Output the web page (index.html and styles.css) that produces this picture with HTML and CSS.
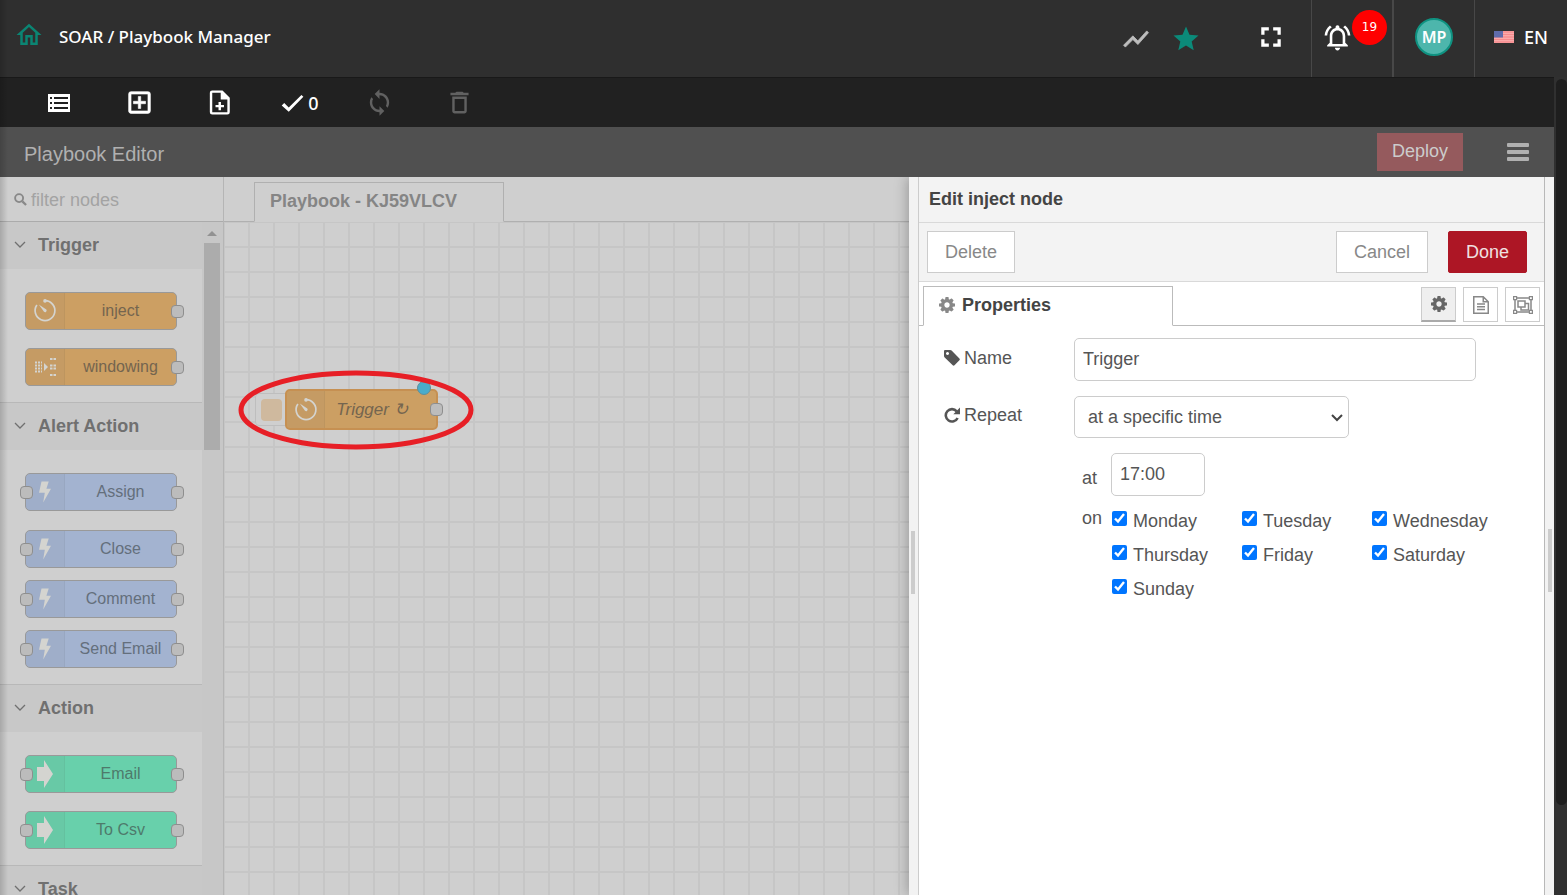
FILE: index.html
```html
<!DOCTYPE html>
<html lang="en">
<head>
<meta charset="utf-8">
<meta name="viewport" content="width=device-width, initial-scale=1">
<title>SOAR / Playbook Manager</title>
<link rel="stylesheet" href="styles.css">
</head>
<body>
<svg class="sprite" aria-hidden="true">
  <symbol id="cog" viewBox="0 -128 1536 1536"><path d="M1024 640q0-106-75-181t-181-75-181 75-75 181 75 181 181 75 181-75 75-181zm512-109v222q0 12-8 23t-20 13l-185 28q-19 54-39 91 35 50 107 138 10 12 10 25t-9 23q-27 37-99 108t-94 71q-12 0-26-9l-138-108q-44 23-91 38-16 136-29 186-7 28-36 28h-222q-14 0-24.5-8.5t-11.5-21.5l-28-184q-49-16-90-37l-141 107q-10 9-25 9-14 0-25-11-126-114-165-168-7-10-7-23 0-12 8-23 15-21 51-66.5t54-70.5q-27-50-41-99l-183-27q-13-2-21-12.5t-8-23.5v-222q0-12 8-23t19-13l186-28q14-46 39-92-40-57-107-138-10-12-10-24 0-10 9-23 26-36 98.500-107.500t94.500-71.500q13 0 26 10l138 107q44-23 91-38 16-136 29-186 7-28 36-28h222q14 0 24.500 8.500t11.500 21.500l28 184q49 16 90 37l142-107q9-9 24-9 13 0 25 10 129 119 165 170 7 8 7 22 0 12-8 23-15 21-51 66.500t-54 70.500q26 50 41 98l183 28q13 2 21 12.500t8 23.500z"/></symbol>
  <symbol id="timer" viewBox="0 0 24 24"><path d="M12 1.700A9.900 9.900 0 1 1 3.900 5.900" fill="none" stroke="currentColor" stroke-width="1.700"/><circle cx="12" cy="1.900" r="1.800"/><path d="M5.800 5.600l7.500 4.900a1.600 1.600 0 0 1-2.300 2.200z"/></symbol>
  <symbol id="window" viewBox="0 0 24 24"><path d="M2 6.500h2v2H2zM5 6.500h2v2H5zM2 9.500h2v2H2zM5 9.500h2v2H5zM2 12.500h2v2H2zM5 12.500h2v2H5zM2 15.500h2v2H2zM5 15.500h2v2H5zM11 8l4 4-4 4zM17 3h2.500v2H17zM20.500 3H23v2h-2.500zM17 9.500h2.500v2H17zM20.500 9.500H23v2h-2.500zM17 12.500h2.500v2H17zM20.500 12.500H23v2h-2.500zM17 19h2.500v2H17zM20.500 19H23v2h-2.500zM8 6.500h1v2H8zM8 9.500h1v2H8zM8 12.500h1v2H8zM8 15.500h1v2H8z"/></symbol>
  <symbol id="bolt" viewBox="0 0 24 24"><path d="M8.500 1.500h7.200l-2.300 7.300H18L10.200 22.500l1.600-9.700H6z"/></symbol>
  <symbol id="arrow" viewBox="0 0 16 28"><path d="M0 7h7V0l9 14-9 14v-7H0z"/></symbol>
  <symbol id="chevron" viewBox="0 0 12 12"><path d="M1 3l5 5 5-5" fill="none" stroke="currentColor" stroke-width="1.300"/></symbol>
</svg>

<header class="topbar">
  <a class="home" href="#" aria-label="Home"><svg viewBox="0 0 24 24"><path d="M12 5.690l5 4.500V18h-2v-6H9v6H7v-7.810l5-4.500M12 3L2 12h3v8h6v-6h2v6h6v-8h3L12 3z"/></svg></a>
  <h1 class="crumb">SOAR / Playbook Manager</h1>
  <button class="top-icon trend" type="button" aria-label="Statistics"><svg viewBox="0 0 24 24"><path d="M3.500 18.490l6-6.010 4 4L22 6.920l-1.410-1.410-7.090 7.970-4-4L2 16.990z" stroke="currentColor" stroke-width=".6"/></svg></button>
  <button class="top-icon star" type="button" aria-label="Favorite"><svg viewBox="0 0 24 24"><path d="M12 17.270L18.180 21l-1.640-7.030L22 9.240l-7.190-.610L12 2 9.190 8.630 2 9.240l5.460 4.730L5.820 21z"/></svg></button>
  <button class="top-icon full" type="button" aria-label="Full screen"><svg viewBox="0 0 24 24"><path d="M3 3h7v3H6v4H3zM14 3h7v7h-3V6h-4zM3 14h3v4h4v3H3zM18 14h3v7h-7v-3h4z"/></svg></button>
  <button class="cell alerts" type="button" aria-label="Notifications"><svg viewBox="0 0 24 24"><path d="M7.580 4.080L6.150 2.650C3.750 4.480 2.170 7.300 2.030 10.500h2c.150-2.650 1.510-4.970 3.550-6.420zm12.390 6.420h2c-.150-3.200-1.730-6.020-4.120-7.850l-1.420 1.430c2.020 1.450 3.390 3.770 3.540 6.420zM18 11c0-3.070-1.640-5.640-4.500-6.320V4c0-.830-.670-1.500-1.500-1.500s-1.500.670-1.500 1.500v.680C7.630 5.360 6 7.920 6 11v5l-2 2v1h16v-1l-2-2v-5zm-2 6H8v-6c0-2.480 1.510-4.500 4-4.500s4 2.020 4 4.500v6zm-4 5c1.100 0 2-.900 2-2h-4c0 1.100.890 2 2 2z"/></svg><span class="badge">19</span></button>
  <button class="cell user" type="button"><span class="avatar">MP</span></button>
  <button class="cell lang" type="button"><svg class="flag" viewBox="0 0 20 12"><rect width="20" height="12" fill="#fbb4b4"/><path d="M0 1h20M0 3.500h20M0 6h20M0 8.500h20M0 11h20" stroke="#f78a8d" stroke-width="1.300"/><rect width="9" height="6.500" fill="#5f6bab"/></svg>EN</button>
</header>

<div class="page">
  <div class="app">
    <nav class="actions" aria-label="Playbook actions">
      <button type="button" aria-label="List"><svg viewBox="0 0 24 20"><path d="M1 1h22v18H1zm2 3v2h2V4zm4 0v2h14V4zM3 9v2h2V9zm4 0v2h14V9zm-4 5v2h2v-2zm4 0v2h14v-2z" fill-rule="evenodd"/></svg></button>
      <button type="button" aria-label="Add"><svg class="large" viewBox="0 0 24 24"><path d="M19 3H5a2 2 0 0 0-2 2v14c0 1.100.900 2 2 2h14a2 2 0 0 0 2-2V5a2 2 0 0 0-2-2zm0 16H5V5h14zM11 17h2v-4h4v-2h-4V7h-2v4H7v2h4z" stroke="currentColor" stroke-width=".5"/></svg></button>
      <button type="button" aria-label="New file"><svg class="large" viewBox="0 0 24 24"><path d="M6 2h8.500L20.500 8v12a2 2 0 0 1-2 2H6a2 2 0 0 1-2-2V4a2 2 0 0 1 2-2zm0 2v16h12.500V9.500h-5.500V4z" fill-rule="evenodd"/><path d="M11.200 11.500h2V14h2.500v2h-2.500v2.500h-2V16H8.700v-2h2.500z"/></svg></button>
      <button type="button"><svg class="check" viewBox="0 0 24 24"><path d="M9 16.170L4.830 12l-2.330 2.300L9 20 22.500 6.300 20.700 4.500z"/></svg>0</button>
      <button class="off" type="button" aria-label="Refresh" disabled><svg class="large" viewBox="0 0 24 24"><path d="M12 4V1L8 5l4 4V6c3.310 0 6 2.690 6 6 0 1.010-.250 1.970-.700 2.800l1.460 1.460A7.930 7.930 0 0 0 20 12c0-4.420-3.580-8-8-8zm0 14c-3.310 0-6-2.690-6-6 0-1.010.250-1.970.700-2.800L5.240 7.740A7.930 7.930 0 0 0 4 12c0 4.420 3.580 8 8 8v3l4-4-4-4z"/></svg></button>
      <button class="off" type="button" aria-label="Remove" disabled><svg class="large" viewBox="0 0 24 24"><path d="M6 19c0 1.100.900 2 2 2h8c1.100 0 2-.900 2-2V7H6zM8 9h8v10H8zm7.500-5l-1-1h-5l-1 1H4.500v2h15V4z"/></svg></button>
    </nav>
    <div class="editor-head">
      <h2>Playbook Editor</h2>
      <button class="deploy" type="button">Deploy</button>
      <button class="menu" type="button" aria-label="Menu"><svg viewBox="0 0 22 18"><rect width="22" height="4" rx="1"/><rect y="7" width="22" height="4" rx="1"/><rect y="14" width="22" height="4" rx="1"/></svg></button>
    </div>
    <div class="editor">
      <aside class="palette">
        <label class="search"><svg viewBox="0 0 14 14"><circle cx="5.500" cy="5.500" r="4.300" fill="none" stroke="currentColor" stroke-width="2"/><path d="M9 9l4 4" stroke="currentColor" stroke-width="2.400"/></svg><input type="text" placeholder="filter nodes" aria-label="filter nodes"></label>
        <div class="palette-body">
          <div class="categories">
            <section>
              <h3><svg><use href="#chevron"/></svg>Trigger</h3>
              <div class="nodes">
                <div class="node orange"><span class="ico"><svg><use href="#timer"/></svg></span><span class="name">inject</span><i class="port out"></i></div>
                <div class="node orange"><span class="ico"><svg><use href="#window"/></svg></span><span class="name">windowing</span><i class="port out"></i></div>
              </div>
            </section>
            <section>
              <h3><svg><use href="#chevron"/></svg>Alert Action</h3>
              <div class="nodes tight">
                <div class="node blue"><i class="port in"></i><span class="ico"><svg><use href="#bolt"/></svg></span><span class="name">Assign</span><i class="port out"></i></div>
                <div class="node blue"><i class="port in"></i><span class="ico"><svg><use href="#bolt"/></svg></span><span class="name">Close</span><i class="port out"></i></div>
                <div class="node blue"><i class="port in"></i><span class="ico"><svg><use href="#bolt"/></svg></span><span class="name">Comment</span><i class="port out"></i></div>
                <div class="node blue"><i class="port in"></i><span class="ico"><svg><use href="#bolt"/></svg></span><span class="name">Send Email</span><i class="port out"></i></div>
              </div>
            </section>
            <section>
              <h3><svg><use href="#chevron"/></svg>Action</h3>
              <div class="nodes">
                <div class="node green"><i class="port in"></i><span class="ico"><svg class="arrow"><use href="#arrow"/></svg></span><span class="name">Email</span><i class="port out"></i></div>
                <div class="node green"><i class="port in"></i><span class="ico"><svg class="arrow"><use href="#arrow"/></svg></span><span class="name">To Csv</span><i class="port out"></i></div>
              </div>
            </section>
            <section>
              <h3><svg><use href="#chevron"/></svg>Task</h3>
            </section>
          </div>
          <div class="palette-scroll"><svg viewBox="0 0 10 5"><path d="M0 5l5-5 5 5z"/></svg><div class="palette-thumb"></div></div>
        </div>
      </aside>

      <main class="workspace">
        <div class="tabs"><div class="tab">Playbook - KJ59VLCV</div></div>
        <div class="canvas">
          <div class="inject-button"><i></i></div>
          <div class="node orange placed"><span class="ico"><svg><use href="#timer"/></svg></span><span class="name">Trigger ↻</span><i class="port out"></i><i class="changed"></i></div>
          <svg class="ring" viewBox="0 0 236 82"><ellipse cx="118" cy="41" rx="115" ry="37" fill="none" stroke="#e71f26" stroke-width="5"/></svg>
        </div>
      </main>

      <section class="tray">
        <div class="grip"><i></i></div>
        <form class="panel">
          <h3 class="tray-title">Edit inject node</h3>
          <div class="tray-buttons">
            <button class="btn" type="button">Delete</button>
            <button class="btn cancel" type="button">Cancel</button>
            <button class="btn done" type="button">Done</button>
          </div>
          <div class="tray-tabs">
            <div class="prop-tab"><svg><use href="#cog"/></svg>Properties</div>
            <div class="tab-icons">
              <button class="on" type="button" aria-label="Properties"><svg><use href="#cog"/></svg></button>
              <button type="button" aria-label="Description"><svg class="doc" viewBox="0 0 16 18"><path d="M.750.750h9.500l5 5v11.500H.750zM10.250.750v5h5M4 8h8M4 10.800h8M4 13.600h8" fill="none" stroke="currentColor" stroke-width="1.500"/></svg></button>
              <button type="button" aria-label="Appearance"><svg class="frame" viewBox="0 0 20 18"><path d="M2 2h16v14H2zM5 5h7v6H5zM12 7.500h3.500V14H8v-3" fill="none" stroke="currentColor" stroke-width="1.500"/><path d="M.600.600h3v3h-3zM16.400.600h3v3h-3zM.600 14.400h3v3h-3zM16.400 14.400h3v3h-3z" fill="#fff" stroke="currentColor" stroke-width="1.200"/></svg></button>
            </div>
          </div>
          <div class="fields">
            <div class="row">
              <label for="name"><svg viewBox="0 0 16 16"><path d="M1 0h5.200q.8 0 1.400.6l7.800 7.800q.9.900 0 1.800l-4.900 5.100q-.9.900-1.800 0L.700 7.400Q0 6.700 0 5.900V1Q0 0 1 0zm2.500 2a1.500 1.500 0 1 0 .01 0z" fill-rule="evenodd"/></svg>Name</label>
              <input class="text" id="name" type="text" value="Trigger">
            </div>
            <div class="row">
              <label for="repeat"><svg viewBox="0 0 16 16"><path d="M12.700 4.300A6.200 6.200 0 1 0 13.600 11" fill="none" stroke="currentColor" stroke-width="2.600"/><path d="M16 .500v6.700H9.300z"/></svg>Repeat</label>
              <div class="select-box"><select id="repeat"><option>at a specific time</option></select><svg viewBox="0 0 12 8"><path d="M1 1l5 5 5-5" fill="none" stroke="currentColor" stroke-width="2"/></svg></div>
            </div>
            <div class="sub at"><label for="time">at</label><input class="text" id="time" type="text" value="17:00"></div>
            <div class="sub"><span>on</span>
              <div class="days">
                <label><input type="checkbox" checked><span>Monday</span></label>
                <label><input type="checkbox" checked><span>Tuesday</span></label>
                <label><input type="checkbox" checked><span>Wednesday</span></label>
                <label><input type="checkbox" checked><span>Thursday</span></label>
                <label><input type="checkbox" checked><span>Friday</span></label>
                <label><input type="checkbox" checked><span>Saturday</span></label>
                <label><input type="checkbox" checked><span>Sunday</span></label>
              </div>
            </div>
          </div>
        </form>
        <div class="grip right"><i></i></div>
      </section>
    </div>
  </div>
  <div class="page-scroll"><div class="page-thumb"></div></div>
</div>
</body>
</html>
```

FILE: styles.css
```css
* { box-sizing: border-box; }

body {
  margin: 0;
  height: 100vh;
  display: flex;
  flex-direction: column;
  overflow: hidden;
  background: #2f2f2f;
  font-family: "Liberation Sans", Arial, sans-serif;
  font-size: 18px;
  line-height: 20px;
  color: #555;
}

/* soft shade along the window's left edge */
body::after {
  content: "";
  position: absolute;
  inset: 0 auto 0 0;
  width: 8px;
  background: linear-gradient(90deg, rgba(0, 0, 0, .16), transparent);
  pointer-events: none;
}

h1, h2, h3 { margin: 0; font-size: inherit; }
button { margin: 0; padding: 0; border: 0; background: none; color: inherit; font: inherit; }
svg { display: block; flex: none; fill: currentColor; }
.sprite { position: absolute; width: 0; height: 0; }

/* top bar */
.topbar {
  display: flex;
  align-items: center;
  flex: none;
  height: 77px;
  background: #2f2f2f;
  color: #fff;
  font-family: "Noto Sans", sans-serif;
}
.home { margin: 0 15px 8px 14px; color: #0b8573; }
.home svg { width: 30px; height: 30px; }
.crumb { flex: 1; margin-bottom: 3px; font-size: 17px; font-weight: 500; }
.top-icon svg { width: 30px; height: 30px; }
.trend { margin-right: 20px; color: #bdbdbd; }
.star { margin-right: 57px; color: #0b8a79; }
.full { margin: 0 27px 3px 0; }
.full svg { width: 26px; height: 26px; }
.cell {
  display: flex;
  align-items: center;
  justify-content: center;
  align-self: stretch;
  padding-bottom: 3px;
  border-left: 1px solid #484848;
}
.alerts { position: relative; width: 81px; padding-right: 29px; }
.alerts svg { width: 31px; height: 31px; }
.badge {
  position: absolute;
  top: 10px;
  right: 5px;
  width: 35px;
  height: 35px;
  border-radius: 50%;
  background: #f00;
  font-family: "DejaVu Sans", sans-serif;
  font-size: 12px;
  line-height: 35px;
}
.user { width: 82px; border-left-width: 2px; }
.avatar {
  width: 38px;
  height: 38px;
  border: 2px solid #0f9281;
  border-radius: 50%;
  background: #4db6ac;
  font-size: 16px;
  font-weight: 600;
  line-height: 35px;
}
.lang { width: 93px; gap: 10px; font-size: 18px; font-weight: 500; }
.flag { width: 20px; height: 12px; }

/* page */
.page { flex: 1; min-height: 0; display: flex; }
.app { flex: 1; min-width: 0; display: flex; flex-direction: column; }
.page-scroll { flex: none; width: 13px; padding: 2px 0 90px 2px; background: #303030; }
.page-thumb { height: 100%; border-radius: 6px; background: #1e1e1e; }

.actions {
  display: flex;
  flex: none;
  height: 50px;
  padding-left: 19px;
  border-top: 1px solid #191919;
  background: #212121;
  color: #fff;
  font-family: "Noto Sans", sans-serif;
  font-weight: 500;
}
.actions button { display: flex; align-items: center; justify-content: center; width: 80px; gap: 3px; }
.actions svg { width: 24px; height: 20px; }
.actions .large { width: 29px; height: 29px; }
.actions .check { width: 26px; height: 26px; }
.actions .off { color: #616161; }

.editor-head {
  display: flex;
  align-items: center;
  flex: none;
  height: 50px;
  padding: 0 25px 0 24px;
  background: #505050;
  color: #b0b0b0;
}
.editor-head h2 { flex: 1; padding-top: 4px; font-size: 20px; font-weight: 400; }
.deploy {
  height: 38px;
  padding: 0 15px 2px;
  margin-right: 44px;
  background: #955a5d;
  color: #ccc;
}
.menu svg { width: 22px; height: 18px; }

.editor { flex: 1; min-height: 0; display: flex; }

/* palette */
.palette {
  display: flex;
  flex-direction: column;
  flex: none;
  width: 224px;
  border-right: 1px solid #b5b5b5;
  background: #cfcfcf;
  color: #707070;
}
.search {
  display: flex;
  align-items: center;
  flex: none;
  height: 45px;
  padding-left: 14px;
  gap: 4px;
  border-bottom: 1px solid #ababab;
  color: #888;
}
.search svg { width: 13px; height: 13px; }
.search input { width: 100%; min-width: 0; border: 0; padding: 2px 0 0; background: none; font: inherit; }
.search input::placeholder { color: #a3a3a3; }
.palette-body { flex: 1; min-height: 0; display: flex; overflow: hidden; }
.categories { flex: 1; }
.categories h3 {
  display: flex;
  align-items: center;
  height: 48px;
  padding: 0 0 1px 14px;
  gap: 12px;
  border-top: 1px solid #b8b8b8;
  background: #c8c8c8;
}
.categories section:first-child h3 { height: 47px; border-top: 0; }
.categories h3 svg { width: 12px; height: 12px; }
.nodes { display: flex; flex-direction: column; gap: 18px; padding: 23px 25px 17px; }
.nodes { padding-bottom: 16px; }
.nodes.tight { gap: 12px; }
.nodes.tight .node:first-child { margin-bottom: 7px; }
.node {
  position: relative;
  display: flex;
  width: 152px;
  height: 38px;
  border: 1px solid #999;
  border-radius: 5px;
  font-size: 16px;
}
.orange { background: #cc9f63; color: #74654f; }
.blue { background: #a3b3d0; color: #646f7c; }
.green { background: #68d0ab; color: #4e7a6b; }
.ico {
  display: flex;
  align-items: center;
  justify-content: center;
  width: 39px;
  border-right: 1px solid rgba(0, 0, 0, .04);
  border-radius: 4px 0 0 4px;
  background: rgba(120, 120, 120, .07);
  color: #d4d4d0;
}
.ico svg { width: 24px; height: 24px; }
.ico .arrow { width: 16px; height: 28px; }
.name { flex: 1; display: flex; align-items: center; justify-content: center; gap: 6px; }
.port {
  position: absolute;
  top: 12px;
  width: 13px;
  height: 13px;
  border: 1px solid #8e8e8e;
  border-radius: 4px;
  background: #bcbcbc;
}
.port.in { left: -6px; }
.port.out { right: -8px; }
.palette-scroll { width: 21px; padding: 9px 3px 0 2px; background: #c7c7c7; color: #929292; }
.palette-scroll svg { width: 10px; height: 5px; margin: 0 auto 7px; }
.palette-thumb { height: 207px; background: #acacac; }

/* workspace */
.workspace { flex: 1; min-width: 0; display: flex; flex-direction: column; background: #cfcfcf; }
.tabs {
  display: flex;
  align-items: flex-end;
  flex: none;
  height: 45px;
  padding-left: 30px;
  border-bottom: 1px solid #b0b0b0;
}
.tab {
  width: 250px;
  height: 40px;
  margin-bottom: -1px;
  padding: 8px 15px;
  border: 1px solid #b0b0b0;
  border-bottom-color: #cfcfcf;
  background: #cfcfcf;
  color: #858585;
  font-weight: 700;
}
.canvas {
  position: relative;
  flex: 1;
  background:
    linear-gradient(90deg, transparent 23px, #c6c6c6 23px) 1px 1px / 25px 25px,
    linear-gradient(transparent 23px, #c6c6c6 23px) 1px 1px / 25px 25px;
}
.inject-button {
  position: absolute;
  left: 31px;
  top: 171px;
  width: 36px;
  height: 33px;
  padding: 5px;
  border: 1px solid #bebebe;
  border-radius: 4px;
  background: #cfcfcf;
}
.inject-button i { display: block; width: 21px; height: 22px; border-radius: 4px; background: #cfb99e; }
.placed {
  position: absolute;
  left: 61px;
  top: 167px;
  width: 153px;
  height: 41px;
  border: 2px solid #c69052;
  font-style: italic;
  font-size: 17px;
}
.placed .ico { width: 38px; }
.placed .name { padding-right: 17px; }
.placed .port.out { right: -7px; }
.changed {
  position: absolute;
  top: -10px;
  right: 5px;
  width: 14px;
  height: 14px;
  border: 1px solid #5e8e9c;
  border-radius: 50%;
  background: #4aaccb;
}
.ring { position: absolute; left: 14px; top: 147px; width: 236px; height: 82px; }

/* edit tray */
.tray {
  position: relative;
  display: flex;
  flex: none;
  width: 645px;
  background: #fff;
  box-shadow: -2px 0 12px rgba(0, 0, 0, .25);
  clip-path: inset(0 0 0 -20px);
}
.grip {
  display: flex;
  align-items: center;
  flex: none;
  width: 10px;
  padding: 52px 0 0 2px;
  border-right: 1px solid #ccc;
  background: #f2f2f2;
}
.grip i { width: 4px; height: 63px; background: #ccc; }
.grip.right { padding: 48px 0 0 3px; border-right: 0; border-left: 1px solid #b8b8b8; }
.panel { flex: 1; min-width: 0; }
.tray-title {
  height: 46px;
  padding: 12px 10px;
  border-bottom: 1px solid #d9d9d9;
  background: #f3f3f3;
  color: #444;
}
.tray-buttons {
  display: flex;
  align-items: center;
  height: 59px;
  padding: 0 17px 0 8px;
  border-bottom: 1px solid #d9d9d9;
  background: #f3f3f3;
}
.btn { height: 42px; padding: 0 17px; border: 1px solid #ccc; background: #fff; color: #888; }
.cancel { margin: 0 20px 0 auto; }
.done { border-color: #ad1625; border-radius: 2px; background: #ad1625; color: #f0e0e1; }
.tray-tabs {
  display: flex;
  align-items: flex-end;
  justify-content: space-between;
  height: 44px;
  padding: 0 4px;
  border-bottom: 1px solid #bbb;
}
.prop-tab {
  display: flex;
  align-items: center;
  width: 250px;
  height: 40px;
  margin-bottom: -1px;
  padding: 0 15px 3px;
  gap: 7px;
  border: 1px solid #bbb;
  border-bottom-color: #fff;
  background: #fff;
  color: #444;
  font-weight: 700;
}
.prop-tab svg { width: 16px; height: 16px; color: #888; }
.tab-icons { display: flex; gap: 7px; margin-bottom: 3px; }
.tab-icons button {
  display: flex;
  align-items: center;
  justify-content: center;
  width: 35px;
  height: 35px;
  border: 1px solid #ccc;
  background: #fff;
  color: #888;
}
.tab-icons .on { border-bottom: 2px solid #aaa; background: #efefef; color: #666; }
.tab-icons .on svg { width: 16px; height: 16px; }
.tab-icons .doc { width: 16px; height: 18px; }
.tab-icons .frame { width: 20px; height: 18px; }

.fields { padding: 12px 20px 0 25px; }
.row { display: flex; margin-bottom: 15px; }
.row label { display: flex; align-items: center; width: 130px; gap: 4px; padding-bottom: 4px; }
.row label svg { width: 16px; height: 16px; }
.text, select {
  border: 1px solid #ccc;
  border-radius: 5px;
  background: #fff;
  color: #555;
  font: inherit;
}
.text { height: 43px; padding: 0 8px; }
#name { flex: 0 1 402px; min-width: 0; }
.select-box { position: relative; flex: 0 1 275px; color: #444; }
select { appearance: none; width: 100%; height: 42px; padding: 0 13px; }
.select-box svg { position: absolute; right: 6px; top: 18px; width: 12px; height: 8px; }
.sub { display: flex; padding-left: 138px; }
.sub > :first-child { width: 29px; }
.at { align-items: center; margin-bottom: 12px; }
.at label { padding-top: 7px; }
#time { width: 94px; }
.days { display: grid; grid-template-columns: repeat(3, 130px); grid-auto-rows: 34px; }
.days label { display: flex; gap: 6px; padding: 3px 0 0 1px; }
.days input { width: 15px; height: 15px; margin: 0; accent-color: #0075ff; }
```
